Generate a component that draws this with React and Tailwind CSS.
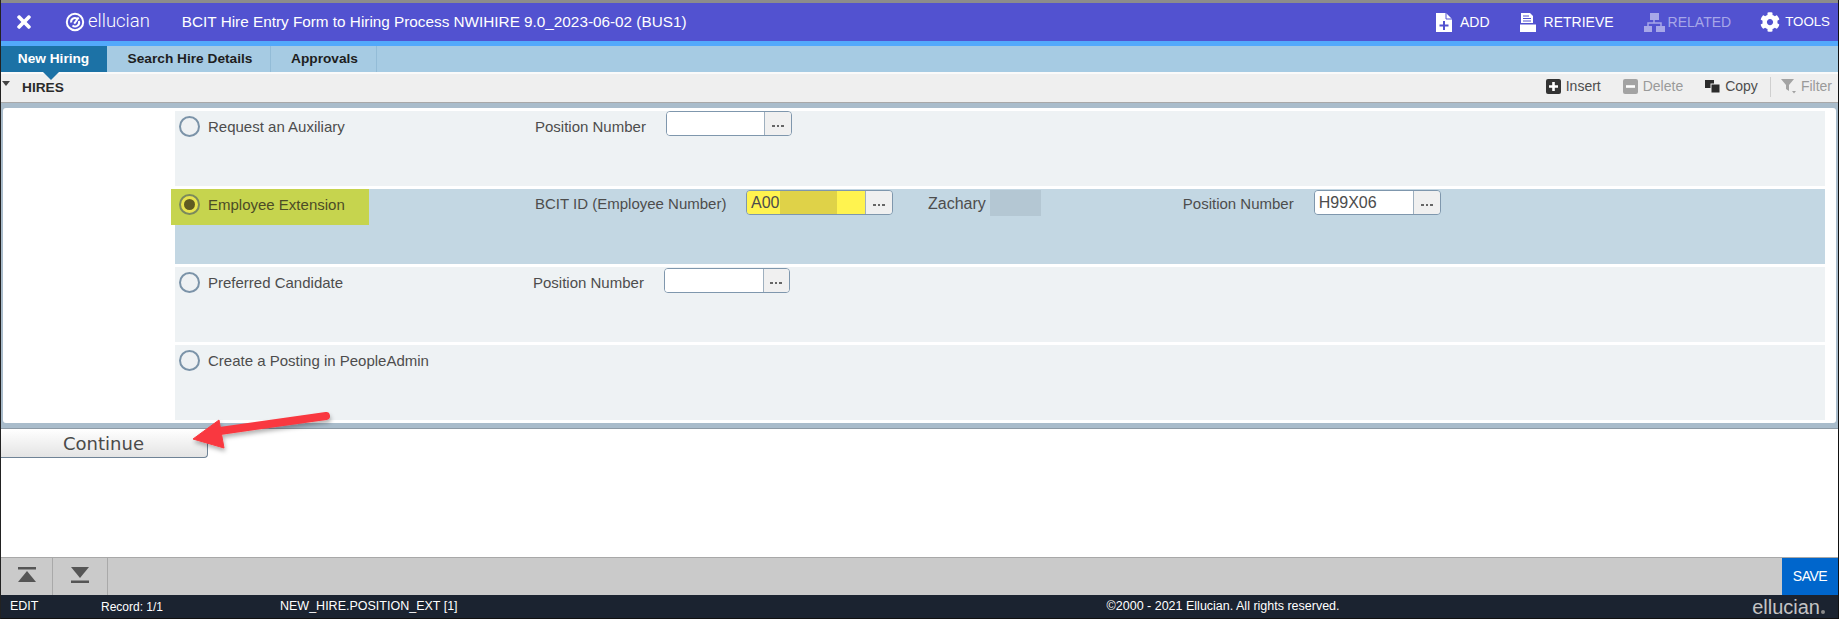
import React from "react";
import { FaCog, FaTimes } from "react-icons/fa";

function Radio() {
  return (
    <div className="w-[21px] h-[21px] shrink-0 rounded-full border-2 border-[#7b93a8] bg-[#eef1f3]" />
  );
}

function Lookup({ width, fieldWidth, value, yellow, children }) {
  return (
    <div className="flex h-[25px] rounded-[4px] border border-[#7f97ad] overflow-hidden shrink-0" style={{ width }}>
      <div className={`relative h-full flex items-center pl-[4px] text-[16px] text-[#4c4c4c] ${yellow ? "bg-[#fff34f]" : "bg-white"}`} style={{ width: fieldWidth }}>
        {children}
        <span className="relative">{value}</span>
      </div>
      <div className="flex-1 bg-[#f0f0f0] border-l border-[#9fb0bf] flex items-center justify-center pt-[5px]">
        <div className="flex gap-[2px]">
          <span className="w-[2.5px] h-[2.5px] bg-[#666666]" />
          <span className="w-[2.5px] h-[2.5px] bg-[#666666]" />
          <span className="w-[2.5px] h-[2.5px] bg-[#666666]" />
        </div>
      </div>
    </div>
  );
}

function HeaderButton({ icon, label, textClass, className }) {
  return (
    <div className={`flex items-center ${className}`}>
      {icon}
      <span className={textClass}>{label}</span>
    </div>
  );
}

function ToolButton({ icon, label, muted, className }) {
  return (
    <div className={`flex items-center gap-[5px] text-[14px] ${muted ? "text-[#9a9a9a]" : "text-[#4d4d4d]"} ${className}`}>
      {icon}
      <span>{label}</span>
    </div>
  );
}

const Logo = () => (
  <svg width="20" height="20" viewBox="0 0 20 20" className="shrink-0">
    <circle cx="10" cy="10" r="8.2" fill="none" stroke="white" strokeWidth="2" />
    <path d="M13.6 5.5 L9.2 11.6 M6.2 10.5 A3.7 3.7 0 0 1 12 6.8 M13.9 9 A4 4 0 0 1 7.5 13.4" fill="none" stroke="white" strokeWidth="2" />
  </svg>
);

export default function App() {
  return (
    <div className="relative w-[1839px] h-[619px] overflow-hidden bg-white border-l border-r border-b border-l-[#222222] border-r-[#111111] border-b-[#111111] font-['Liberation_Sans',Arial,sans-serif] flex flex-col">
      {/* Top bar */}
      <div className="h-[3px] bg-[#8c8c8c] shrink-0" />
      <div className="h-[38px] bg-[#5252d0] shrink-0 flex items-center text-white">
        <FaTimes className="ml-[13px] w-[20px] h-[20px]" />
        <div className="ml-[31px] flex items-center gap-[3px]">
          <Logo />
          <span className="text-[18.5px] font-['Roboto',sans-serif] font-light">ellucian</span>
        </div>
        <span className="ml-[32px] text-[15.3px]">BCIT Hire Entry Form to Hiring Process NWIHIRE 9.0_2023-06-02 (BUS1)</span>
        <div className="ml-auto flex items-center">
          <HeaderButton
            className="gap-[8px]"
            textClass="text-[14px] text-white"
            label="ADD"
            icon={
              <svg width="16" height="19" viewBox="0 0 16 19">
                <path d="M0 0H10L16 6V19H0Z" fill="white" />
                <path d="M10 0V6H16" fill="none" stroke="#5252d0" strokeWidth="1" />
                <path d="M8 8V17M3.5 12.5H12.5" stroke="#5252d0" strokeWidth="2" />
              </svg>
            }
          />
          <HeaderButton
            className="gap-[8px] ml-[30px]"
            textClass="text-[14px] text-white"
            label="RETRIEVE"
            icon={
              <svg width="16" height="19" viewBox="0 0 16 19">
                <path d="M1 0H10L13 3V10H1Z" fill="white" />
                <path d="M3 3H9M3 5.5H11M3 8H11" stroke="#5252d0" strokeWidth="1" />
                <path d="M0 11.5H16V19H0Z" fill="white" />
              </svg>
            }
          />
          <HeaderButton
            className="gap-[3px] ml-[30px]"
            textClass="text-[14px] text-[#a7a7e8]"
            label="RELATED"
            icon={
              <svg width="21" height="19" viewBox="0 0 21 19" fill="#a7a7e8">
                <rect x="6" y="0" width="9" height="7" />
                <rect x="0" y="13" width="8" height="6" />
                <rect x="12" y="13" width="9" height="6" />
                <path d="M10 7V10M4 13V10H17V13" fill="none" stroke="#a7a7e8" strokeWidth="1.5" />
              </svg>
            }
          />
          <HeaderButton
            className="gap-[5px] ml-[29px] mr-[8px]"
            textClass="text-[13.3px] text-white"
            label="TOOLS"
            icon={<FaCog className="w-[20px] h-[20px] text-white" />}
          />
        </div>
      </div>
      <div className="h-[5px] bg-[#52a9fb] shrink-0" />

      {/* Tabs */}
      <div className="h-[26px] bg-[#a6cbe3] shrink-0 flex text-[13.7px] font-bold text-[#1e1e1e]">
        <div className="relative w-[106px] bg-[#1c72a6] text-white flex items-center justify-center pr-[1px]">
          New Hiring
          <div className="absolute left-[42px] top-[26px] w-0 h-0 border-l-[8px] border-r-[8px] border-t-[8px] border-l-transparent border-r-transparent border-t-[#1c72a6] z-10" />
        </div>
        <div className="w-[164px] border-r border-[#93bcd7] flex items-center justify-center pl-[3px]">Search Hire Details</div>
        <div className="w-[106px] border-r border-[#93bcd7] flex items-center justify-center pl-[2px]">Approvals</div>
      </div>

      {/* Section bar */}
      <div className="h-[2px] bg-[#fafafa] shrink-0" />
      <div className="h-[28px] bg-[#efefef] shrink-0 flex items-center">
        <div className="ml-[1px] w-0 h-0 border-l-[4px] border-r-[4px] border-t-[5px] border-l-transparent border-r-transparent border-t-[#444444] -mt-[9px]" />
        <span className="ml-[12px] text-[13.7px] font-bold text-[#2a2a2a]">HIRES</span>
        <div className="ml-auto flex items-center -mt-[3px]">
          <ToolButton
            label="Insert"
            icon={
              <svg width="15" height="15" viewBox="0 0 15 15">
                <rect width="15" height="15" rx="2" fill="#333333" />
                <path d="M7.5 3V12M3 7.5H12" stroke="white" strokeWidth="2.6" />
              </svg>
            }
          />
          <ToolButton
            className="ml-[22px]"
            muted
            label="Delete"
            icon={
              <svg width="15" height="15" viewBox="0 0 15 15">
                <rect width="15" height="15" rx="2" fill="#a3a3a3" />
                <path d="M3 7.5H12" stroke="white" strokeWidth="2.6" />
              </svg>
            }
          />
          <ToolButton
            className="ml-[22px]"
            label="Copy"
            icon={
              <svg width="15" height="15" viewBox="0 0 15 15" fill="#2b2b2b">
                <rect x="0" y="1" width="9" height="8" />
                <rect x="6" y="5" width="9" height="9" stroke="#efefef" strokeWidth="1" />
              </svg>
            }
          />
          <div className="ml-[12px] w-px h-[20px] bg-[#cfcfcf]" />
          <ToolButton
            className="ml-[10px] mr-[6px]"
            muted
            label="Filter"
            icon={
              <svg width="15" height="15" viewBox="0 0 15 15" fill="#a3a3a3">
                <path d="M0 0H13L8 6V12L5 10V6Z" />
                <path d="M11 12H15L13 14.5Z" />
              </svg>
            }
          />
        </div>
      </div>
      <div className="h-px bg-[#a8a8a8] shrink-0" />

      {/* Panel */}
      <div className="shrink-0 bg-[#a9bccb] px-[2px] pt-[5px] pb-[5px] h-[325px]">
        <div className="h-full bg-white rounded-[3px] pl-[172px] pr-[11px] pt-[3px] flex flex-col gap-[3px] text-[15px] text-[#4d4d4d]">
          {/* Row 1 */}
          <div className="h-[75px] bg-[#eef2f4] flex items-start pl-[4px]">
            <div className="w-[356px] flex items-start gap-[8px] pt-[5px]">
              <Radio />
              <span>Request an Auxiliary</span>
            </div>
            <span className="mt-[5px] w-[131px]">Position Number</span>
            <Lookup width={126} fieldWidth={97} />
          </div>
          {/* Row 2 */}
          <div className="h-[75px] bg-[#c3d7e3] flex items-start pl-[4px]">
            <div className="w-[356px] flex items-center pt-[5px] relative">
              <div className="absolute -left-[8px] top-0 w-[198px] h-[36px] bg-[#c6d44e]" />
              <div className="relative flex items-start gap-[8px]">
                <div className="w-[21px] h-[21px] shrink-0 rounded-full border-2 border-[#7b8a5c] flex items-center justify-center bg-[#e7e34e]">
                  <div className="w-[11px] h-[11px] rounded-full bg-[#5f5b22]" />
                </div>
                <span className="text-[#4c4c26]">Employee Extension</span>
              </div>
            </div>
            <span className="mt-[4px] w-[211px]">BCIT ID (Employee Number)</span>
            <div className="mt-[1px] w-[182px]">
              <Lookup width={147} fieldWidth={118} value="A00" yellow>
                <div className="absolute left-[33px] top-0 w-[57px] h-full bg-[#dfd248]" />
              </Lookup>
            </div>
            <span className="mt-[3px] text-[16px]">Zachary</span>
            <div className="ml-[4px] w-[51px] h-[26px] mt-[1px] bg-[#b4c7d3]" />
            <span className="mt-[4px] ml-[142px] w-[131px]">Position Number</span>
            <div className="mt-[1px]">
              <Lookup width={127} fieldWidth={98} value="H99X06" />
            </div>
          </div>
          {/* Row 3 */}
          <div className="h-[75px] bg-[#eef2f4] flex items-start pl-[4px]">
            <div className="w-[354px] flex items-start gap-[8px] pt-[5px]">
              <Radio />
              <span>Preferred Candidate</span>
            </div>
            <span className="mt-[5px] w-[130.5px]">Position Number</span>
            <div className="mt-[1px]">
              <Lookup width={126} fieldWidth={98} />
            </div>
          </div>
          {/* Row 4 */}
          <div className="h-[75px] bg-[#eef2f4] flex items-start pl-[4px]">
            <div className="flex items-start gap-[8px] pt-[5px]">
              <Radio />
              <span>Create a Posting in PeopleAdmin</span>
            </div>
          </div>
        </div>
      </div>
      <div className="h-px bg-[#8d9aa5] shrink-0" />

      {/* Continue */}
      <div className="flex-1 min-h-0">
        <button className="block w-[207px] h-[29px] rounded-br-[4px] border-r border-b border-[#6f8396] bg-gradient-to-b from-white to-[#e4e4e4] font-['DejaVu_Sans',sans-serif] text-[18px] text-[#4a4a4a] pr-[1px] pt-[1px]">
          Continue
        </button>
      </div>

      {/* Bottom toolbar */}
      <div className="h-px bg-[#a8a8a8] shrink-0" />
      <div className="h-[37px] bg-[#cacaca] shrink-0 flex">
        <div className="w-[52px] border-r border-[#a9a9a9] flex items-center justify-center pb-[3px]">
          <svg width="18" height="16" viewBox="0 0 18 16" fill="#555555">
            <rect x="0" y="0" width="18" height="2.5" />
            <path d="M9 4L18 15H0Z" />
          </svg>
        </div>
        <div className="w-[55px] border-r border-[#a9a9a9] flex items-center justify-center pb-[3px]">
          <svg width="18" height="16" viewBox="0 0 18 16" fill="#555555">
            <path d="M0 0H18L9 11Z" />
            <rect x="0" y="13.5" width="18" height="2.5" />
          </svg>
        </div>
        <div className="ml-auto w-[56px] bg-[#0066cc] text-white text-[14px] tracking-[-0.5px] flex items-center justify-center">SAVE</div>
      </div>

      {/* Footer */}
      <div className="h-[23px] bg-[#1b2330] shrink-0 flex items-center text-[12.5px] text-white relative">
        <span className="ml-[9px] w-[91px]">EDIT</span>
        <span className="w-[179px] text-[12px]">Record: 1/1</span>
        <span>NEW_HIRE.POSITION_EXT [1]</span>
        <span className="ml-[649px]">©2000 - 2021 Ellucian. All rights reserved.</span>
        <span className="ml-auto mr-[13px] text-[20px] leading-none text-[#c4c4c4] flex items-baseline">
          ellucian<span className="ml-[1px] w-[4px] h-[4px] rounded-full bg-[#8a8a8a]" />
        </span>
      </div>

      {/* Annotation arrow */}
      <svg className="absolute left-0 top-0 pointer-events-none" width="340" height="465" viewBox="0 0 340 465">
        <defs>
          <filter id="arrowShadow" x="-20%" y="-40%" width="140%" height="180%">
            <feDropShadow dx="1" dy="3" stdDeviation="2" floodColor="#000000" floodOpacity="0.3" />
          </filter>
        </defs>
        <g filter="url(#arrowShadow)">
          <path d="M219 431 L325 416" stroke="#f9393f" strokeWidth="8" strokeLinecap="round" fill="none" />
          <path d="M192 439 L218 420 L223 448 Z" fill="#f9393f" stroke="#f9393f" strokeWidth="1" strokeLinejoin="round" />
        </g>
      </svg>
    </div>
  );
}
